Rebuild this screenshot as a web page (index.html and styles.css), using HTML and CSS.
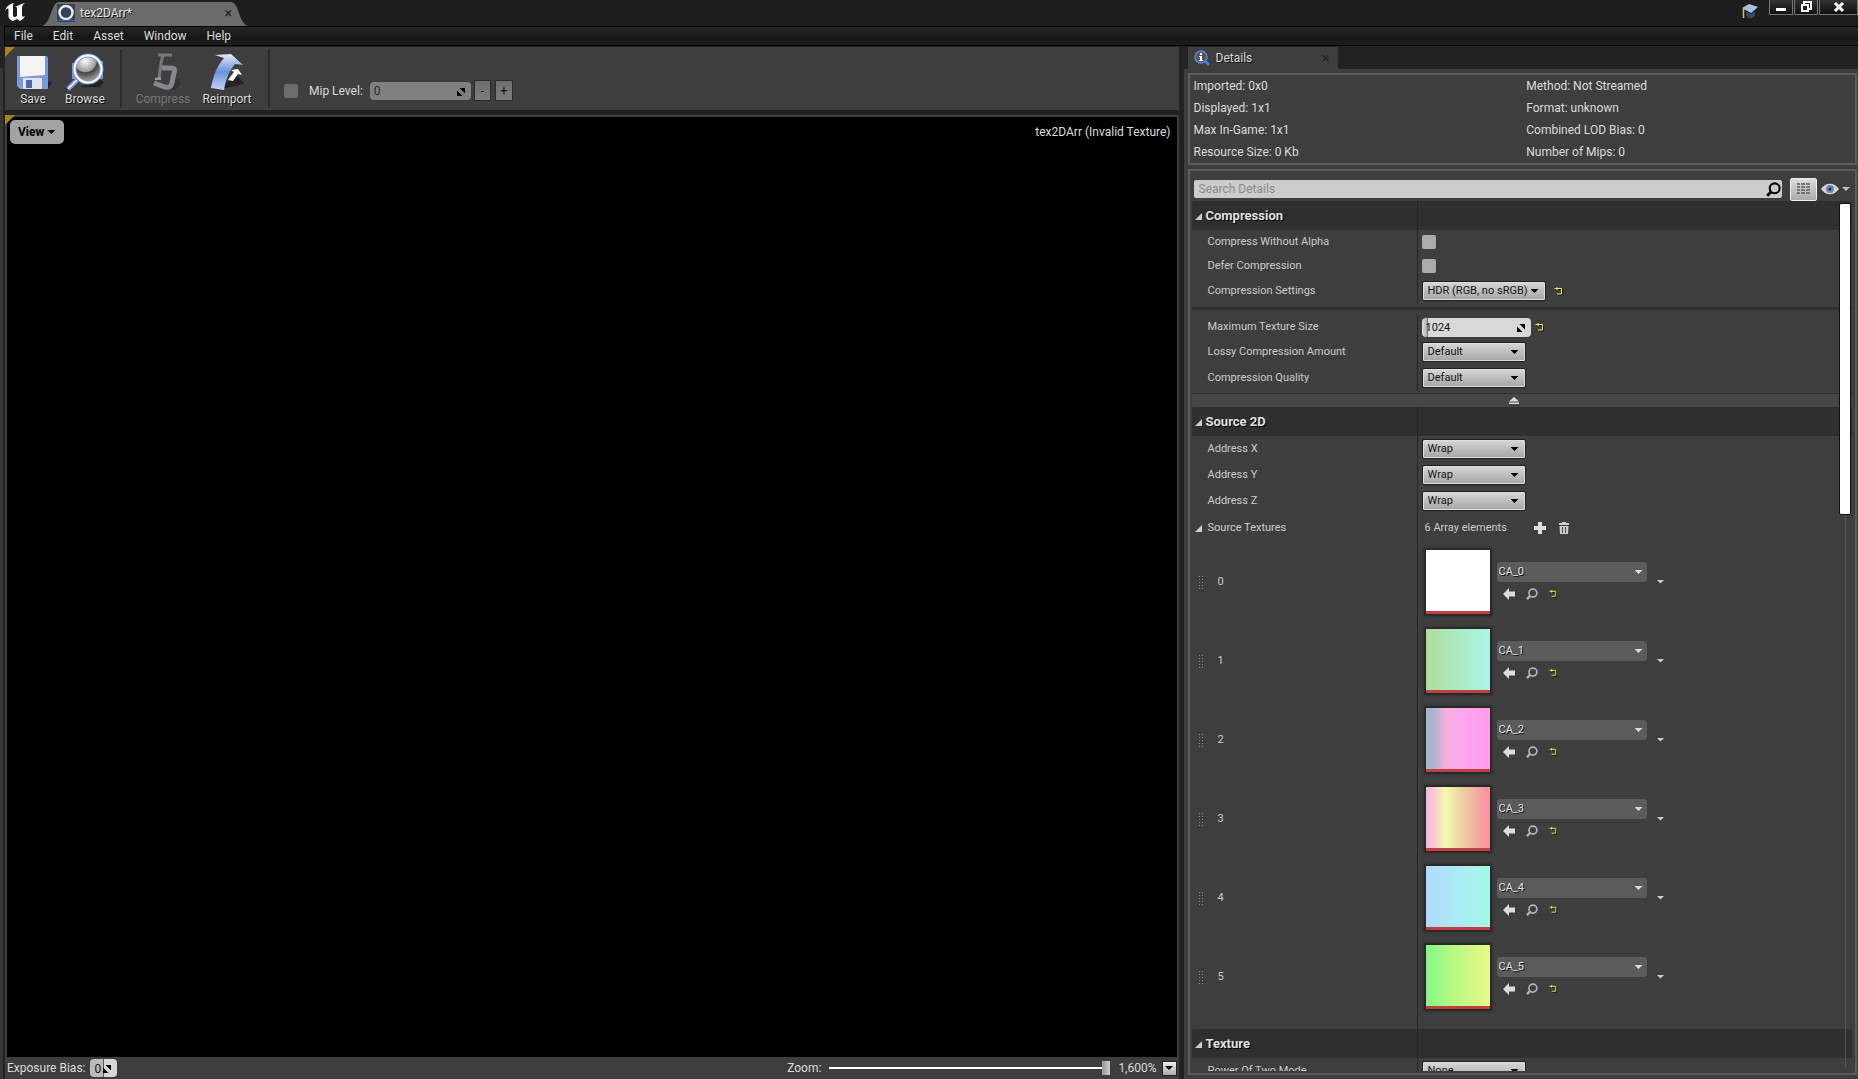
FILE: index.html
```html
<!DOCTYPE html>
<html lang="en">
  <head>
    <meta charset="utf-8">
    <title>tex2DArr</title>
    <link rel="stylesheet" href="styles.css">
  </head>
  <body>
    <svg class="defs" aria-hidden="true">
      <symbol id="reset" viewBox="0 0 9 9"><path d="M1.500 2.500h7v5.500H4" fill="none" stroke="#111"/><path d="M.5 1.500h7v5.500H3M3 0v3" fill="none" stroke="#f4f43c"/></symbol>
      <symbol id="spin" viewBox="0 0 10 10"><path d="M3.500 1H9v5.500zM1 3.500V9h5.500z"/></symbol>
      <symbol id="use" viewBox="0 0 12 12"><path d="M6 0v3.500h6v5H6V12L0 6z" fill="#ddd"/></symbol>
      <symbol id="lens" viewBox="0 0 13 13"><circle cx="7.500" cy="5.500" r="4.300" fill="none" stroke="currentColor" stroke-width="1.800"/><path d="M4.500 8.500L1 12" stroke="currentColor" stroke-width="2.500"/></symbol>
    </svg>

    <header class="titlebar">
      <svg class="logo" viewBox="0 0 22 18"><path d="M0 8C1 4 4 1 9 0 8 1 8 2 8 4v8c0 2 2 3 4 1V5c0-1-1-1-2-1 3-1 5-3 10-4-3 2-3 4-3 6v6c0 2 1 2 3 1-1 3-4 4-5 5l-3-2-4 2C5 17 3 15 3.500 11V7C3.500 5 2 5 0 8z" fill="#fff"/></svg>
      <div class="doc-tab">
        <svg class="tab-shape" viewBox="0 0 208 25" preserveAspectRatio="none"><path d="M0 25C8 24 9 12 13 5 15 1 17 1 21 1H187c4 0 6 0 8 4 4 7 5 19 13 20z" fill="#6b6b6b"/></svg>
        <svg class="tab-icon" viewBox="0 0 18 18"><path d="M0 0h18v18H0z" fill="#33415a"/><circle cx="9" cy="8.500" r="6.500" fill="none" stroke="#e8e8e8" stroke-width="2.500"/><path d="M0 16h18v1H0z" fill="#1a6ab8"/></svg>
        <span class="tab-name">tex2DArr*</span>
        <button class="tab-close" aria-label="Close tab">×</button>
      </div>
      <svg class="tutorial" viewBox="0 0 16 16"><path d="M4 8v3c2 4 6 4 9 1V7l-4 3z" fill="#31496d"/><path d="M0 4l7-4 9 3-7 6z" fill="#9cc4ee"/><path d="M8 4L1.500 5v9" fill="none" stroke="#d8b878" stroke-width="1.500"/></svg>
      <div class="win-buttons">
        <button aria-label="Minimize"><svg viewBox="0 0 12 12"><path d="M1 7h10v3H1z" fill="#fff"/></svg></button>
        <button aria-label="Restore"><svg viewBox="0 0 12 12"><path d="M4 3V1h7v7H9M2 4h6v6H2z" fill="none" stroke="#fff" stroke-width="2"/></svg></button>
        <button class="win-close" aria-label="Close"><svg viewBox="0 0 12 12"><path d="M2 2l8 8M10 2l-8 8" stroke="#fff" stroke-width="3"/></svg></button>
      </div>
    </header>

    <nav class="menu">
      <button>File</button>
      <button>Edit</button>
      <button>Asset</button>
      <button>Window</button>
      <button>Help</button>
    </nav>

    <main class="editor">
      <div class="left">
        <div class="toolbar corner">
          <button class="tool">
            <svg viewBox="0 0 38 38"><path d="M6 36l28-1 4-5-4-2z" fill="#222"/><path d="M3 3h30l1 2v31H6l-3-3z" fill="#7898e0"/><path d="M6 3h25v19c-8 1-17 1-25 2z" fill="#f4f4f4"/><path d="M9 25h19v11H9z" fill="#dfe3ea"/><path d="M12 27h6v8h-6z" fill="#4a68a8"/></svg>
            Save
          </button>
          <button class="tool">
            <svg viewBox="0 0 38 38"><defs><radialGradient id="glass" cx=".4" cy=".2" r=".8"><stop offset="0" stop-color="#fff"/><stop offset=".5" stop-color="#999"/><stop offset=".55" stop-color="#444"/><stop offset="1" stop-color="#aaa"/></radialGradient></defs><path d="M6 10h4v16H6zM32 8h5v18h-5z" fill="#7898e0"/><path d="M14 34h20l4-5-6-3z" fill="#222"/><path d="M11 27l-9 9" stroke="#7898e0" stroke-width="5"/><path d="M11 27l-9 9" stroke="#fff" stroke-width="1.500"/><circle cx="22" cy="16" r="13.500" fill="url(#glass)" stroke="#7898e0" stroke-width="4"/><circle cx="22" cy="16" r="13.500" fill="none" stroke="#fff" stroke-width="2"/></svg>
            Browse
          </button>
          <span class="sep"></span>
          <button class="tool" disabled>
            <svg viewBox="0 0 38 38"><path d="M20 36l12 1 5-8-5-4z" fill="#333"/><path d="M14 2h14M19 2l-2 8-2 16" fill="none" stroke="#777" stroke-width="3"/><path d="M11 25l6-1v3h-6z" fill="#999"/><path d="M18 15h9c4 0 4 2 3 5l-2 10c-1 4-3 5-7 4l-11-4" fill="none" stroke="#858890" stroke-width="5"/></svg>
            Compress
          </button>
          <button class="tool">
            <svg viewBox="0 0 38 38"><defs><linearGradient id="arrow" x2="0" y2="1"><stop offset="0" stop-color="#e3ebf8"/><stop offset=".5" stop-color="#6b93e0"/><stop offset="1" stop-color="#c5d5f4"/></linearGradient></defs><path d="M12 36l16-16 8 11z" fill="#222"/><path d="M7 2l16-1 12 11-8-1c-6 7-9 15-11 26l-13-2C5 23 9 13 16 5z" fill="url(#arrow)"/><path d="M23 17l7-1 4 6-4-1-5 7-5-1 6-8z" fill="#fff"/></svg>
            Reimport
          </button>
          <span class="sep"></span>
          <div class="mip">
            <input type="checkbox" class="check" aria-label="Use mip level">
            <label for="mip">Mip Level:</label>
            <span class="spin dim mip-spin"><input id="mip" type="text" value="0"><svg><use href="#spin"/></svg></span>
            <button class="step">-</button>
            <button class="step">+</button>
          </div>
        </div>

        <div class="viewport corner">
          <div class="canvas">
            <button class="view">View</button>
            <span>tex2DArr (Invalid Texture)</span>
          </div>
          <div class="status">
            <label for="bias">Exposure Bias:</label>
            <span class="spin bias-spin"><input id="bias" type="text" value="0"><svg><use href="#spin"/></svg></span>
            <label class="zoom-label" for="zoom">Zoom:</label>
            <input id="zoom" type="range" min="0" max="1600" value="1600">
            <span class="zoom-value">1,600%</span>
            <button class="zoom-menu" aria-label="Zoom presets"></button>
          </div>
        </div>
      </div>

      <div class="right">
        <div class="panel-tab">
          <svg viewBox="0 0 16 16"><path d="M10 10l5 5" stroke="#4f7be0" stroke-width="2.500"/><circle cx="7" cy="7" r="6" fill="#555" stroke="#5b86e6" stroke-width="1.500"/><path d="M6 3h2v2H6zM5 6h3v4h1v1H5v-1h1V7H5z" fill="#fff"/></svg>
          <span>Details</span>
          <button class="tab-close" aria-label="Close details">×</button>
        </div>
        <div class="panel">
          <div class="box info">
            <span>Imported: 0x0</span><span>Method: Not Streamed</span>
            <span>Displayed: 1x1</span><span>Format: unknown</span>
            <span>Max In-Game: 1x1</span><span>Combined LOD Bias: 0</span>
            <span>Resource Size: 0 Kb</span><span>Number of Mips: 0</span>
          </div>

          <div class="box details">
            <div class="search-row">
              <div class="search">
                <input type="text" placeholder="Search Details" aria-label="Search Details">
                <svg><use href="#lens"/></svg>
              </div>
              <button class="matrix" aria-label="Property matrix"><svg viewBox="0 0 13 14"><path d="M0 1h3v2H0zM4 1h4v2H4zM9 1h4v2H9zM0 4h3v2H0zM4 4h4v2H4zM9 4h4v2H9zM0 7h3v2H0zM4 7h4v2H4zM9 7h4v2H9zM0 10h3v2H0zM4 10h4v2H4zM9 10h4v2H9z" fill="#777"/></svg></button>
              <button class="eye" aria-label="View options"><svg viewBox="0 0 18 12"><path d="M0 6c5-7 13-7 18 0-5 7-13 7-18 0z" fill="#d4d4d4"/><circle cx="9" cy="6" r="4" fill="#6a86ad"/><circle cx="9" cy="6" r="1.500" fill="#233"/></svg></button>
            </div>

            <div class="list">
              <h2>Compression</h2>
              <div class="row"><label for="alpha">Compress Without Alpha</label><div><input id="alpha" type="checkbox" class="check"></div></div>
              <div class="row"><label for="defer">Defer Compression</label><div><input id="defer" type="checkbox" class="check"></div></div>
              <div class="row tall"><label for="settings">Compression Settings</label><div><span class="drop wide"><select id="settings"><option>HDR (RGB, no sRGB)</option></select></span><button class="reset" aria-label="Reset"><svg><use href="#reset"/></svg></button></div></div>
              <div class="advanced-line"></div>
              <div class="row"><label for="max">Maximum Texture Size</label><div><span class="spin max-spin"><input id="max" type="text" value="1024"><svg><use href="#spin"/></svg></span><button class="reset near" aria-label="Reset"><svg><use href="#reset"/></svg></button></div></div>
              <div class="row tall"><label for="lossy">Lossy Compression Amount</label><div><span class="drop"><select id="lossy"><option>Default</option></select></span></div></div>
              <div class="row tall"><label for="quality">Compression Quality</label><div><span class="drop"><select id="quality"><option>Default</option></select></span></div></div>
              <button class="collapse" aria-label="Hide advanced"><svg viewBox="0 0 10 7"><path d="M0 4.500L5 0l5 4.500zM0 5.500h10V7H0z" fill="#ddd"/></svg></button>

              <h2>Source 2D</h2>
              <div class="row tall"><label for="ax">Address X</label><div><span class="drop"><select id="ax"><option>Wrap</option></select></span></div></div>
              <div class="row tall"><label for="ay">Address Y</label><div><span class="drop"><select id="ay"><option>Wrap</option></select></span></div></div>
              <div class="row tall"><label for="az">Address Z</label><div><span class="drop"><select id="az"><option>Wrap</option></select></span></div></div>
              <div class="row array"><span class="name">Source Textures</span><div><span class="count">6 Array elements</span>
                <button class="icon" aria-label="Add element"><svg viewBox="0 0 12 12"><path d="M4 0h4v4h4v4H8v4H4V8H0V4h4z" fill="#ddd"/></svg></button>
                <button class="icon" aria-label="Empty array"><svg viewBox="0 0 12 12"><path d="M1 1h3V0h4v1h3v2H1zM1.500 4h9L10 12H2z" fill="#ccc"/><path d="M4.500 5v6M7.500 5v6" stroke="#444"/></svg></button></div></div>

              <div id="textures"></div>

              <h2>Texture</h2>
              <div class="row tall"><label for="pow">Power Of Two Mode</label><div><span class="drop"><select id="pow"><option>None</option></select></span></div></div>
              <div class="scrollbar"><span></span></div>
            </div>
          </div>
        </div>
      </div>
    </main>

    <script>
      var gradients = [
        '#fff, #fff',
        '#b0dc98, #aee8c0 45%, #a8f5e8',
        '#a0b8cc, #a8b4cc 10%, #f8b0dc 32%, #fca8ee 55%, #ff9aec',
        '#f4b8e0, #f8c8d4 12%, #f4fcb0 30%, #ecdca8 48%, #f0c0a0 68%, #fc94a0 94%',
        '#b0dcff, #a8f8ea',
        '#84f888, #b8fa84 45%, #e8f888'
      ];
      var html = '';
      gradients.forEach(function(g, i) {
        html += '<div class="row texture">' +
          '<label for="tex' + i + '"><span class="grip"></span>' + i + '</label>' +
          '<div><span class="thumb" style="background-image: linear-gradient(90deg, ' + g + ')"></span>' +
          '<div class="asset"><span class="drop flat"><select id="tex' + i + '"><option>CA_' + i + '</option></select></span>' +
          '<div class="asset-tools">' +
          '<button aria-label="Use selected"><svg><use href="#use"/></svg></button>' +
          '<button aria-label="Browse to asset"><svg><use href="#lens"/></svg></button>' +
          '<button aria-label="Reset"><svg class="small"><use href="#reset"/></svg></button>' +
          '</div></div><button class="more" aria-label="Element options"></button></div></div>';
      });
      document.getElementById('textures').innerHTML = html;
    </script>
  </body>
</html>
```
FILE: styles.css
```css
* {
  box-sizing: border-box;
}

body {
  margin: 0;
  height: 100vh;
  display: flex;
  flex-direction: column;
  overflow: hidden;
  background: #222;
  color: #dcdcdc;
  font: 12px/16px Roboto, "Liberation Sans", sans-serif;
}

button, input, select {
  margin: 0;
  padding: 0;
  border: 0;
  background: none;
  color: inherit;
  font: inherit;
  appearance: none;
  outline: 0;
}

svg {
  display: block;
}

.defs {
  position: absolute;
  width: 0;
  height: 0;
}

/* title bar and menu */

.titlebar {
  display: flex;
  height: 26px;
  flex: none;
  background: #1d1d1d;
}

.logo {
  width: 22px;
  height: 18px;
  margin: 3px 14px 0 5px;
}

.doc-tab {
  position: relative;
  display: flex;
  align-items: center;
  width: 208px;
  padding-left: 16px;
  color: #e4e4e4;
  text-shadow: 1px 1px #111;
}

.tab-shape {
  position: absolute;
  left: 0;
  bottom: 0;
  width: 208px;
  height: 25px;
}

.tab-icon {
  position: relative;
  width: 18px;
  height: 18px;
}

.tab-name {
  position: relative;
  margin-left: 5px;
}

.tab-close {
  position: relative;
  margin-left: auto;
  color: #222;
  font-size: 14px;
  text-shadow: none;
}

.doc-tab .tab-close {
  margin-right: 17px;
}

.tutorial {
  width: 16px;
  height: 16px;
  margin: 4px 11px 0 auto;
}

.win-buttons {
  display: flex;
  gap: 1px;
}

.win-buttons button {
  display: flex;
  align-items: center;
  justify-content: center;
  width: 24px;
  height: 15px;
  border: 1px solid #777;
  border-top: 0;
  background: linear-gradient(#333, #111);
}

.win-buttons .win-close {
  width: 39px;
}

.win-buttons svg {
  width: 12px;
  height: 12px;
}

.menu {
  display: flex;
  flex: none;
  gap: 20px;
  height: 20px;
  margin-left: 4px;
  padding-left: 9px;
  border: 1px solid #000;
  border-right: 0;
  background: linear-gradient(#252525, #161616 60%, #1e1e1e);
}

/* layout */

.editor {
  flex: 1;
  display: flex;
  min-height: 0;
  padding: 1px 0 0 5px;
  background: linear-gradient(#363636, #363636) 0 22px / 3px 100% no-repeat;
}

.left {
  flex: 1;
  display: flex;
  flex-direction: column;
  gap: 5px;
}

.right {
  display: flex;
  flex-direction: column;
  width: 36.4%;
  margin-left: 5px;
}

.corner {
  position: relative;
}

.corner::before {
  content: "";
  position: absolute;
  top: 0;
  left: 0;
  border-top: 10px solid #a8841c;
  border-right: 10px solid transparent;
}

/* toolbar */

.toolbar {
  display: flex;
  height: 63px;
  padding-left: 2px;
  background: #3e3e3e;
}

.tool {
  width: 52px;
  margin-top: 2px;
  text-align: center;
  text-shadow: 1px 1px #111;
}

.sep ~ .tool {
  width: 64px;
}

.tool svg {
  width: 38px;
  height: 38px;
  margin: 0 auto;
}

.tool:disabled {
  color: #757575;
  text-shadow: none;
}

.sep {
  width: 2px;
  margin: 2px 9px;
  background: #2d2d2d;
}

.mip {
  display: flex;
  align-items: center;
  margin: 24px 0 0 5px;
}

.mip label {
  margin: 0 7px 0 11px;
}

.check {
  display: block;
  width: 14px;
  height: 14px;
  border-radius: 2px;
  background: #ababab;
}

.mip .check {
  background: #6c6c6c;
}

.spin {
  position: relative;
  display: block;
  height: 19px;
  border-radius: 4px;
  background: #d8d8d8;
  color: #111;
}

.spin input {
  width: 100%;
  height: 19px;
  padding: 0 4px;
}

.spin svg {
  position: absolute;
  top: 5px;
  right: 5px;
  width: 10px;
  height: 10px;
}

.dim {
  height: 18px;
  background: #808080;
  color: #292929;
}

.mip-spin {
  width: 101px;
}

.step {
  width: 17px;
  height: 21px;
  margin-left: 3px;
  border: 1px solid #2b2b2b;
  background: linear-gradient(#6e6e6e, #7e7e7e);
  color: #111;
}

.step + .step {
  width: 18px;
  margin-left: 4px;
}

/* viewport */

.viewport {
  flex: 1;
  display: flex;
  flex-direction: column;
  padding: 2px 2px 0;
  background: #3e3e3e;
}

.canvas {
  flex: 1;
  display: flex;
  align-items: flex-start;
  justify-content: space-between;
  padding: 3px 6px 3px 3px;
  background: #000;
}

.canvas span {
  margin-top: 4px;
}

.view {
  display: flex;
  align-items: center;
  gap: 3px;
  height: 24px;
  padding: 0 9px 0 8px;
  border-radius: 5px;
  background: #a2a2a2;
  color: #000;
  font-weight: bold;
}

.view::after, .drop::after, .zoom-menu::after, .eye::after, .more::after {
  content: "";
  width: 8px;
  height: 4px;
  background: currentColor;
  clip-path: polygon(0 0, 100% 0, 50% 100%);
}

.status {
  display: flex;
  align-items: center;
  height: 22px;
}

.bias-spin {
  width: 27px;
  height: 18px;
  margin-left: 5px;
  background: linear-gradient(90deg, #bbb 13px, #555 13px, #555 14px, #d8d8d8 14px);
}

.zoom-label {
  margin-left: auto;
}

#zoom {
  width: 281px;
  height: 14px;
  margin: 0 8px;
  background: linear-gradient(#fff, #fff) center / 100% 2px no-repeat;
}

#zoom::-webkit-slider-thumb {
  appearance: none;
  width: 8px;
  height: 14px;
  background: linear-gradient(90deg, #999, #ccc);
}

.zoom-menu {
  display: flex;
  align-items: center;
  justify-content: center;
  width: 15px;
  height: 15px;
  margin-left: 5px;
  border: 1px solid #222;
  background: linear-gradient(#eee, #aaa);
  color: #000;
}

/* details panel */

.panel-tab {
  display: flex;
  align-items: center;
  width: 150px;
  height: 22px;
  margin-left: 4px;
  padding: 0 8px 0 6px;
  background: #3e3e3e;
  text-shadow: 1px 1px #111;
}

.panel-tab svg {
  width: 16px;
  height: 16px;
  margin-right: 6px;
}

.panel {
  flex: 1;
  display: flex;
  flex-direction: column;
  gap: 4px;
  min-height: 0;
  padding: 4px 1px 4px 4px;
  background: #3e3e3e;
}

.box {
  border: 2px solid #5c5c5c;
}

.info {
  display: grid;
  grid-template-columns: 1fr 1fr;
  column-gap: 4px;
  line-height: 22px;
  padding-left: 4px;
}

.details {
  flex: 1;
  display: flex;
  flex-direction: column;
  min-height: 0;
  padding: 7px 3px 2px 2px;
}

.search-row {
  display: flex;
  align-items: center;
  height: 22px;
  margin: 0 2px 1px;
}

.search {
  flex: 1;
  display: flex;
  align-items: center;
  height: 18px;
  padding: 0 1px 0 5px;
  border-radius: 2px;
  background: #ccc;
  color: #000;
}

.search input {
  flex: 1;
}

.search input::placeholder {
  color: #8a8a8a;
}

.search svg {
  width: 15px;
  height: 15px;
}

.matrix {
  display: flex;
  align-items: center;
  justify-content: center;
  width: 27px;
  height: 23px;
  margin: 0 4px 0 8px;
  border: 1px solid #eee;
  border-radius: 2px;
  background: linear-gradient(#ddd, #aaa);
}

.matrix svg {
  width: 13px;
  height: 14px;
}

.eye {
  display: flex;
  align-items: center;
  gap: 3px;
  color: #bbb;
}

.eye svg {
  width: 18px;
  height: 12px;
}

.list {
  position: relative;
  flex: 1;
  min-height: 0;
  overflow: hidden;
  font-size: 11px;
}

h2 {
  position: relative;
  display: flex;
  align-items: center;
  height: 29px;
  margin: 0;
  padding-left: 14px;
  border-radius: 3px 3px 0 0;
  background: linear-gradient(#252525, #252525) 225px 0 / 1px 100% no-repeat #2f2f2f;
  color: #e0e0e0;
  font-size: 13px;
  font-weight: bold;
  text-shadow: 1px 1px #000;
}

h2::before, .array .name::before {
  content: "";
  position: absolute;
  left: 3px;
  bottom: 10px;
  border-bottom: 7px solid #ccc;
  border-left: 7px solid transparent;
}

.row {
  display: grid;
  grid-template-columns: 225px 1fr;
  height: 24px;
  color: #ccc;
}

.row > label, .row > .name {
  position: relative;
  display: flex;
  align-items: center;
  padding-left: 16px;
}

.row > div {
  display: flex;
  align-items: center;
  padding-left: 4px;
  border-left: 1px solid #262626;
}

.tall {
  height: 26px;
}

.array {
  height: 28px;
}

.drop {
  position: relative;
  width: 104px;
  height: 20px;
}

.wide {
  width: 124px;
}

.drop select {
  width: 100%;
  height: 20px;
  padding-left: 5px;
  border: 1px solid #202020;
  border-radius: 2px;
  background: linear-gradient(#d8d8d8, #a4a4a4);
  box-shadow: inset 0 0 0 1px #ddd;
  color: #111;
}

.drop::after {
  position: absolute;
  top: 8px;
  right: 7px;
  background: #000;
  pointer-events: none;
}

.reset {
  margin-left: 8px;
}

.reset.near {
  margin-left: 4px;
}

.reset svg {
  width: 9px;
  height: 9px;
}

.max-spin {
  width: 109px;
  background: linear-gradient(90deg, #e4e4e4, #aaa 5px, #777 5px, #777 6px, #d8d8d8 6px);
}

.advanced-line {
  height: 11px;
  border-top: 3px solid #3e3e3e;
  background: linear-gradient(#2b2b2b, #3e3e3e 5px);
}

.collapse {
  display: flex;
  align-items: center;
  justify-content: center;
  width: 100%;
  height: 14px;
  margin-top: 2px;
  padding-right: 16px;
  border-top: 1px solid #333;
  background: #464646;
}

.collapse svg {
  width: 10px;
  height: 7px;
}

.count {
  margin: 0 27px 0 3px;
}

.icon {
  width: 12px;
  height: 12px;
  margin-right: 12px;
}

#textures {
  padding-bottom: 13px;
  background: linear-gradient(#262626, #262626) 225px 0 / 1px 100% no-repeat;
}

.texture {
  height: 79px;
}

.texture > label {
  padding-left: 6px;
}

.grip {
  width: 5px;
  height: 14px;
  margin-right: 15px;
  background: radial-gradient(circle, #888 25%, transparent 30%) 0 0 / 3px 3px;
}

.thumb {
  width: 64px;
  height: 64px;
  margin: 1px 7px 0 4px;
  border-bottom: 3px solid #c04040;
  box-shadow: 0 0 2px 2px #262626;
}

.asset {
  width: 150px;
  margin-top: 4px;
}

.flat {
  display: block;
  width: 150px;
  color: #ddd;
}

.flat select {
  padding-left: 2px;
  border: 0;
  border-radius: 3px;
  background: #5b5b5b;
  box-shadow: none;
  color: #e4e4e4;
  text-shadow: 1px 1px #111;
}

.flat::after {
  right: 4px;
  background: #ddd;
}

.asset-tools {
  display: flex;
  align-items: center;
  gap: 11px;
  height: 23px;
  padding-left: 6px;
  color: #b4b4b4;
}

.asset-tools svg {
  width: 12px;
  height: 12px;
}

.asset-tools .small {
  width: 8px;
  height: 8px;
}

.more {
  display: flex;
  margin-left: 10px;
  color: #ccc;
}

.scrollbar {
  position: absolute;
  top: 2px;
  right: 1px;
  bottom: 2px;
  width: 12px;
  background: linear-gradient(#555, #555) center / 1px 100% no-repeat;
}

.scrollbar span {
  display: block;
  height: 36%;
  border: 1px solid #111;
  border-radius: 2px;
  background: #fff;
}
```
